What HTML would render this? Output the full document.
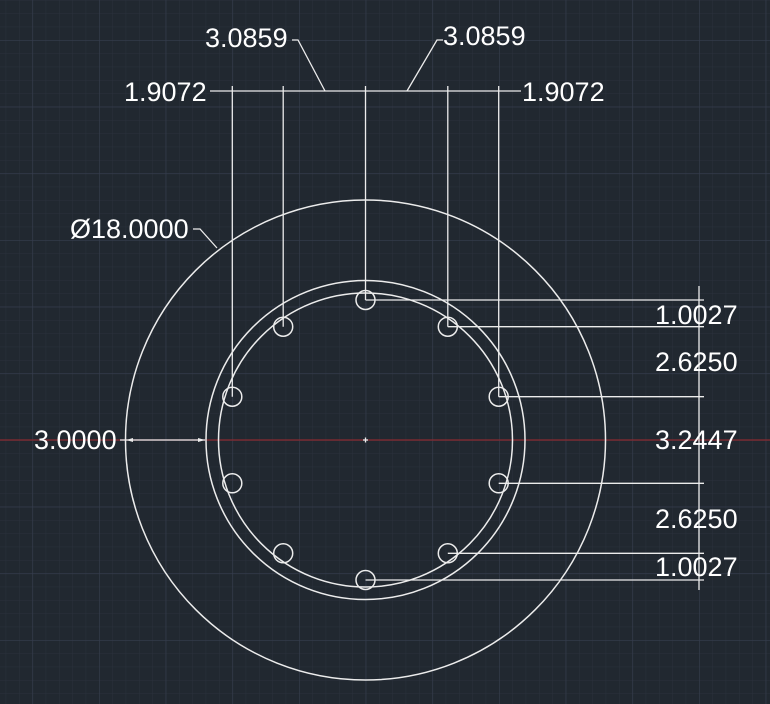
<!DOCTYPE html>
<html><head><style>
html,body{margin:0;padding:0;background:#212830;}
svg{display:block}
text{font-family:"Liberation Sans",sans-serif;font-size:27px;fill:#fff}
</style></head><body>
<svg width="770" height="704" viewBox="0 0 770 704" xmlns="http://www.w3.org/2000/svg">
<defs>
<pattern id="minor" x="5.67" y="0" width="13.333" height="13.333" patternUnits="userSpaceOnUse">
<path d="M0 0V13.333M0 0H13.333" stroke="#2a313c" stroke-width="1" fill="none"/>
</pattern>
<pattern id="major" x="32.33" y="40" width="66.667" height="66.667" patternUnits="userSpaceOnUse">
<path d="M0 0V66.667M0 0H66.667" stroke="#363d4e" stroke-width="1.2" fill="none"/>
</pattern>
</defs>
<rect width="770" height="704" fill="#212830"/>
<rect width="770" height="704" fill="url(#minor)"/>
<rect width="770" height="704" fill="url(#major)"/>
<line x1="0" y1="440" x2="770" y2="440" stroke="#8a2a30" stroke-width="1.2"/>
<g fill="none" stroke="#ececec" stroke-width="1.5">
<circle cx="365.5" cy="440" r="240"/>
<circle cx="365.5" cy="440" r="159.5"/>
<circle cx="365.5" cy="440" r="147"/>
<circle cx="365.5" cy="300" r="9.5"/>
<circle cx="283.2" cy="326.7" r="9.5"/>
<circle cx="447.8" cy="326.7" r="9.5"/>
<circle cx="232.3" cy="396.7" r="9.5"/>
<circle cx="498.7" cy="396.7" r="9.5"/>
<circle cx="232.3" cy="483.3" r="9.5"/>
<circle cx="498.7" cy="483.3" r="9.5"/>
<circle cx="283.2" cy="553.3" r="9.5"/>
<circle cx="447.8" cy="553.3" r="9.5"/>
<circle cx="365.5" cy="580" r="9.5"/>
</g>
<g stroke="#ececec" stroke-width="1.3" fill="none">
<path d="M363 440h5M365.5 437.5v5"/>
<path d="M232.3 86V396.7M283.2 86V326.7M365.5 86V300M447.8 86V326.7M498.7 86V396.7"/>
<path d="M210 91H521"/>
<path d="M292 40H298L325 91M407 91L437 40H443"/>
<path d="M193 229H200L217 248"/>
<path d="M699 286V590"/>
<path d="M365.5 300H704M447.8 326.7H704M498.7 396.7H704M498.7 483.3H704M447.8 553.3H704M365.5 580H704"/>
<path d="M120 440H205"/>
</g>
<g fill="#ececec">
<path d="M126 440l7-2v4zM205 440l-7-2v4z"/>
</g>
<text x="205" y="47">3.0859</text>
<text x="443" y="45">3.0859</text>
<text x="124" y="101">1.9072</text>
<text x="522" y="101">1.9072</text>
<text x="70" y="238">Ø18.0000</text>
<text x="34" y="449">3.0000</text>
<text x="655" y="324">1.0027</text>
<text x="655" y="371">2.6250</text>
<text x="655" y="449">3.2447</text>
<text x="655" y="528">2.6250</text>
<text x="655" y="576">1.0027</text>
</svg>
</body></html>
